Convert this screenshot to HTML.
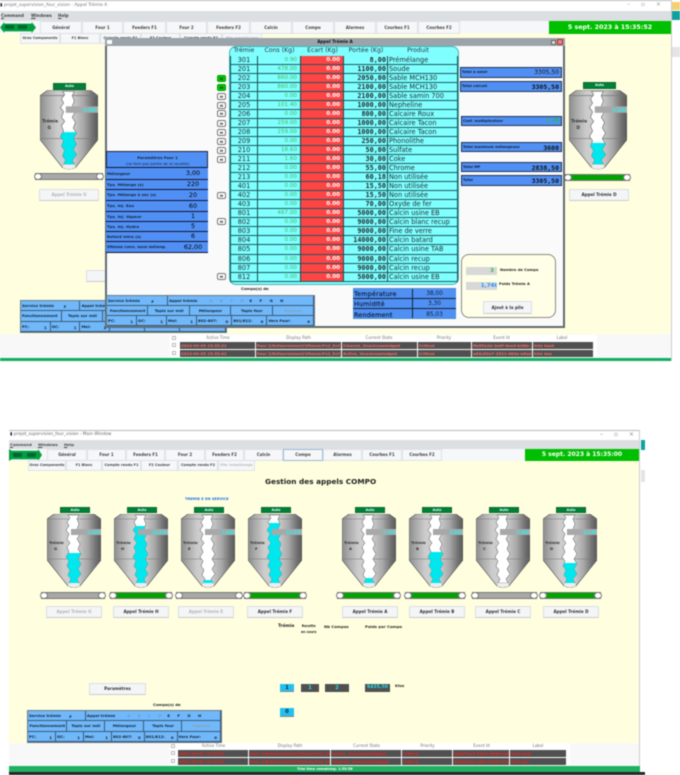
<!DOCTYPE html>
<html lang="fr"><head><meta charset="utf-8"><title>Appel Trémie</title>
<style>
html,body{margin:0;padding:0;background:#fff}
body{position:relative;width:680px;height:775px;overflow:hidden;font-family:"DejaVu Sans","Liberation Sans",sans-serif;color:#222;filter:blur(.45px)}
.a{position:absolute;box-sizing:border-box;white-space:nowrap}
.n{display:flex;position:absolute}
.n span{box-sizing:border-box;background:#f5f7f9;border:1px solid #dfe3e6;text-align:center;font-size:4px;color:#444;font-weight:bold;overflow:hidden;white-space:nowrap;flex:none}
.n.s span{font-size:3.5px}
.b{position:absolute;box-sizing:border-box;background:#f4f5f7;border:1px solid #dcdfe3;border-bottom-color:#c8ccd0;text-align:center;font-size:4.1px;font-weight:bold;color:#333;white-space:nowrap}
.d{color:#b5b5b5}
.clock{position:absolute;background:#00bf00;color:#fff;font-weight:bold;text-align:center;box-sizing:border-box}
.auto{position:absolute;background:#00803a;color:#dff;font-size:3.4px;text-align:center;font-weight:bold;box-sizing:border-box;border:1px solid #0a6a30}
.conv{position:absolute;box-sizing:border-box;height:7px;background:#a8a8a8;border-top:1px solid #777;border-bottom:1px solid #777}
.conv.g{background:#00a400}
.conv:before,.conv:after{content:"";position:absolute;top:-1px;width:8px;height:7px;border-radius:50%;background:#fff;border:1px solid #777;box-sizing:border-box}
.conv:before{left:-1px}.conv:after{right:-1px}
.r{display:flex;height:9.05px;font-size:6.6px;line-height:8.6px;box-sizing:border-box}
.r i{font-style:normal;display:block;box-sizing:border-box;border-right:1px solid #1a4a50;border-bottom:1px solid #1a5a60;background:#80ffff;overflow:hidden;flex:none;color:#1c2c30}
.r i:nth-child(1){width:28px;text-align:center;border-left:1px solid #1a4a50}
.r i:nth-child(2){width:43px;text-align:right;color:#3cba58;font-size:5.6px;padding-right:3px}
.r i:nth-child(3){width:43px;text-align:right;background:#ff4444;color:#fff;font-size:5.6px;font-weight:bold;padding-right:3px}
.r i:nth-child(4){width:44px;text-align:right;font:bold 6.8px/8.6px "DejaVu Sans Mono",monospace;padding-right:1px}
.r i:nth-child(5){width:70px;padding-left:1px}
.hb{position:absolute;left:217px;width:9px;height:7px;border:1px solid #777;border-radius:2px;background:#fff;font-size:3.8px;line-height:5px;text-align:center;font-weight:bold;box-sizing:border-box}
.hb.g{background:#00c800;border-color:#00a000}
.p{position:absolute;left:106px;width:102px;background:#5090f4;border-bottom:1px solid #113;box-sizing:border-box;font-size:3.9px;font-weight:bold;color:#123;padding-left:1px}
.p b{position:absolute;left:67px;width:40px;text-align:center;top:0;font-size:6.4px;font-weight:normal;color:#000}
.t{position:absolute;left:460px;width:102px;background:#5090f4;border:1px solid #235;box-sizing:border-box;font-size:3.6px;font-weight:bold;color:#123;padding-left:1px}
.t b{position:absolute;right:2px;top:1px;font:bold 6.5px "DejaVu Sans Mono",monospace;color:#111}
.sv{position:absolute;box-sizing:border-box;background:#70b8fa;border:1px solid #6a7a88;font-size:3.9px;font-weight:bold;color:#123}
.sv div{display:flex;height:33.33%}
.sv span{display:block;box-sizing:border-box;border-right:1px solid #3a5a7a;border-bottom:1px solid #3a5a7a;overflow:hidden;position:relative;line-height:9px;padding-left:1px;flex:none;white-space:nowrap}
.sv em{position:absolute;right:3px;top:1px;font-style:normal}
.sv u{text-decoration:none;color:#6a9ad0;margin-left:12px;word-spacing:6px}
.sv s{text-decoration:none;word-spacing:6px;margin-left:6px}
.al{position:absolute;box-sizing:border-box;background:#f4f4f4;font-size:4px;color:#777}
.al .h,.al .w{display:flex}
.al .h span{text-align:center;overflow:hidden;flex:none}
.al .w{height:7px;margin-bottom:1px}
.al .w span{background:#505050;font-size:3.9px;font-weight:bold;margin-right:1px;overflow:hidden;line-height:7px;padding-left:1px;box-sizing:border-box;flex:none;white-space:nowrap}
.ck{position:absolute;width:4px;height:4px;border:.5px solid #bbb;background:#fff;box-sizing:border-box}
.l{position:absolute;font-size:4.3px;font-weight:bold;color:#222;white-space:nowrap;text-align:center}
svg text{font-family:"DejaVu Sans",sans-serif}
</style></head><body>
<svg width="0" height="0" style="position:absolute"><defs>
<linearGradient id="gr" x1="0" x2="1" y1="0" y2="0"><stop offset="0" stop-color="#8c8c8c"/><stop offset=".12" stop-color="#a8a8a8"/><stop offset=".3" stop-color="#cccccc"/><stop offset=".55" stop-color="#d0d0d0"/><stop offset=".75" stop-color="#a8a8a8"/><stop offset=".9" stop-color="#747474"/><stop offset="1" stop-color="#585858"/></linearGradient>
<clipPath id="w"><polygon points="21,1 23,4 20,8 22,12 19,16 22,20 20,25 23,29 20,33 22,38 19,43 22,47 20,52 23,56 21,61 24,65 22,69 32,69 30,65 34,60 31,55 34,50 31,45 34,40 31,35 33,30 30,25 33,20 30,15 32,10 30,5 32,1"/></clipPath>
<symbol id="h" viewBox="0 0 54 74"><path d="M7 0H47L54 5V46L33 72Q27 75 21 72L0 46V5Z" fill="url(#gr)" stroke="#555" stroke-width=".6"/><path d="M0 45H54M0 5H54" stroke="#777" stroke-width=".6"/><polygon points="21,1 23,4 20,8 22,12 19,16 22,20 20,25 23,29 20,33 22,38 19,43 22,47 20,52 23,56 21,61 24,65 22,69 32,69 30,65 34,60 31,55 34,50 31,45 34,40 31,35 33,30 30,25 33,20 30,15 32,10 30,5 32,1" fill="#fff" stroke="#555" stroke-width=".5"/><path d="M22 69H32L33 72Q27 75 21 72Z" fill="#eee"/></symbol>
</defs></svg>

<!-- TOP WINDOW -->
<div class="a" style="left:0;top:0;width:671px;height:1px;background:#bbb"></div>
<div class="a" style="left:0;top:2px;font-size:4.4px;color:#777;line-height:8px"><span style="color:#223;font-weight:bold">▮</span> projet_supervision_four_vision - Appel Trémie A</div>
<div class="a" style="left:627px;top:1px;font-size:6px;color:#999;word-spacing:9px">– ▫ ×</div>
<div class="a" style="left:0;top:11px;width:671px;height:10px;background:#dcdfe2;font-size:4.1px;line-height:9px;font-weight:bold;color:#444"><span class="a" style="left:1px"><u>C</u>ommand</span><span class="a" style="left:31px"><u>W</u>indows</span><span class="a" style="left:58px"><u>H</u>elp</span></div>
<div class="a" style="left:0;top:21px;width:671px;height:13px;background:#f5f7f9"></div>
<div class="a" style="left:0;top:33px;width:671px;height:301px;background:#ffffe0"></div>
<div class="a" style="left:0;top:22px;width:36px;height:11px;background:#00a040;clip-path:polygon(0 50%,12% 0,12% 15%,88% 15%,88% 0,100% 50%,88% 100%,88% 85%,12% 85%,12% 100%)"></div>
<div class="a" style="left:5px;top:25px;width:9px;height:4px;background:#063"></div><div class="a" style="left:18px;top:25px;width:9px;height:4px;background:#063"></div>
<div class="n" style="left:40px;top:21px;height:13px;line-height:11px">
<span style="width:42px">Général</span><span style="width:41px">Four 1</span><span style="width:43px">Feeders F1</span><span style="width:41px">Four 2</span><span style="width:43px">Feeders F2</span><span style="width:42px">Calcin</span><span style="width:42px">Compo</span><span style="width:42px">Alarmes</span><span style="width:42px">Courbes F1</span><span style="width:42px">Courbes F2</span></div>
<div class="n s" style="left:20px;top:33px;height:11px;line-height:9px">
<span style="width:40px">Gros Components</span><span style="width:40px">F1 Blanc</span><span style="width:41px">Compte rendu F1</span><span style="width:39px">F2 Couleur</span><span style="width:42px">Compte rendu F2</span><span style="width:40px;color:#bbb">Pile remplissage</span></div>
<div class="clock" style="left:549px;top:21px;width:122px;height:13px;font-size:6.3px;line-height:13px">5 sept. 2023 à 15:35:52</div>

<!-- top hoppers -->
<div class="auto" style="left:53px;top:83px;width:33px;height:7px;line-height:5px">Auto</div>
<svg class="a" style="left:40px;top:90px;width:58px;height:80px" viewBox="0 0 54 74"><use href="#h" width="54" height="74"/><rect x="15" y="39" width="24" height="31" fill="#00e8ee" clip-path="url(#w)"/><rect x="24" y="15" width="30" height="6" fill="#a8a8a8"/><text x="53" y="20" font-size="4.4" font-weight="bold" fill="#20f0f0" text-anchor="end">9,99t</text><text x="2" y="30" font-size="3.9" fill="#333" font-weight="bold">Trémie</text><text x="7" y="36" font-size="3.9" fill="#333" font-weight="bold">G</text></svg>
<div class="conv" style="left:35px;top:173px;width:68px"></div>
<div class="b d" style="left:39px;top:189px;width:60px;height:12px;line-height:10px">Appel Trémie G</div>
<div class="b" style="left:86px;top:270px;width:24px;height:12px"></div>

<div class="auto" style="left:583px;top:82px;width:33px;height:7px;line-height:5px">Auto</div>
<svg class="a" style="left:569px;top:90px;width:58px;height:80px" viewBox="0 0 54 74"><use href="#h" width="54" height="74"/><rect x="15" y="49" width="24" height="21" fill="#00e8ee" clip-path="url(#w)"/><rect x="24" y="15" width="30" height="6" fill="#a8a8a8"/><text x="53" y="20" font-size="4.4" font-weight="bold" fill="#20f0f0" text-anchor="end">6,44t</text><text x="2" y="30" font-size="3.9" fill="#333" font-weight="bold">Trémie</text><text x="7" y="36" font-size="3.9" fill="#333" font-weight="bold">D</text></svg>
<div class="conv g" style="left:565px;top:174px;width:65px"></div>
<div class="b" style="left:569px;top:189px;width:60px;height:12px;line-height:10px">Appel Trémie D</div>

<!-- left service panel behind dialog -->
<div class="sv" style="left:20px;top:300px;width:207px;height:33px">
<div><span style="width:29%">Service trémie<em style="right:13px">F</em></span><span style="width:71%">Appel trémie</span></div>
<div><span style="width:20%">Fonctionnement</span><span style="width:20%;text-align:center">Tapis sur mél</span><span style="width:60%"></span></div>
<div><span style="width:14.5%">PC:<em>1</em></span><span style="width:14.5%">GC:<em>1</em></span><span style="width:14.5%">Mel:<em>1</em></span><span style="width:17%"></span><span style="width:17%"></span><span style="width:22.5%"></span></div></div>

<!-- Alarm band top -->
<div class="a" style="left:0;top:334px;width:671px;height:24px;background:#f8f8f8"></div>
<div class="al" style="left:170px;top:335px;width:427px;height:22px;background:#fff">
<div class="ck" style="left:2px;top:1px"></div><div class="ck" style="left:2px;top:8px"></div><div class="ck" style="left:2px;top:16px"></div>
<div class="h" style="height:7px;padding-left:10px;line-height:6px"><span style="width:76px">Active Time</span><span style="width:85px">Display Path</span><span style="width:76px">Current State</span><span style="width:54px">Priority</span><span style="width:61px">Event Id</span><span style="width:60px">Label</span></div>
<div class="w" style="padding-left:10px;color:#ff6868"><span style="width:75px">2023-09-05 15:35:32</span><span style="width:85px">Four 2/Enfournement/Vitesse/Fn2_Enf_...</span><span style="width:75px">Cleared, Unacknowledged</span><span style="width:53px">Critical</span><span style="width:60px">ffe65e2d-3a6f-4ee4-b98b-...</span><span style="width:60px">très haut</span></div>
<div class="w" style="padding-left:10px;color:#ff6868"><span style="width:75px">2023-09-05 15:35:42</span><span style="width:85px">Four 2/Enfournement/Vitesse/Fn2_Enf_...</span><span style="width:75px">Active, Unacknowledged</span><span style="width:53px">Critical</span><span style="width:60px">a64c62e7-3521-483e-a6ae-...</span><span style="width:60px">très bas</span></div></div>
<div class="a" style="left:0;top:358px;width:671px;height:3px;background:#10b060"></div>

<!-- DIALOG -->
<div class="a" style="left:105px;top:38px;width:460px;height:290px;background:#fafafa;border:2px solid #5f6a72;border-top:0"></div>
<div class="a" style="left:105px;top:38px;width:460px;height:8px;background:#9aa4aa;text-align:center;font-size:4.2px;font-weight:bold;line-height:8px;color:#111">Appel Trémie A</div>
<div class="a" style="left:107px;top:40px;width:5px;height:4px;background:#fff"></div>
<div class="a" style="left:551px;top:40px;width:5px;height:5px;background:#ddd;border:.5px solid #666"></div>
<div class="a" style="left:557px;top:39px;width:6px;height:6px;background:#f08080;border:.5px solid #a33;border-radius:1px"></div>

<!-- Main table -->
<div class="a" style="left:229px;top:46px;width:230px;height:239px;background:#80ffff;border:1.5px solid #40b8b8;border-radius:7px"></div>
<div class="a" style="left:230px;top:47px;width:228px;height:9px;font-size:6.2px;display:flex;color:#234;text-align:center;line-height:8px"><span style="width:28px">Trémie</span><span style="width:43px">Cons (Kg)</span><span style="width:43px">Ecart (Kg)</span><span style="width:44px">Portée (Kg)</span><span style="width:60px">Produit</span></div>
<div class="a" style="left:230px;top:55.5px;width:228px">
<div class="r"><i>301</i><i>0.90</i><i>0.00</i><i>8,00</i><i>Prémélange</i></div>
<div class="r"><i>201</i><i>478.00</i><i>0.00</i><i>1100,00</i><i>Soude</i></div>
<div class="r"><i>202</i><i>860.00</i><i>0.00</i><i>2050,00</i><i>Sable MCH130</i></div>
<div class="r"><i>203</i><i>860.00</i><i>0.00</i><i>2100,00</i><i>Sable MCH130</i></div>
<div class="r"><i>204</i><i>0.00</i><i>0.00</i><i>2100,00</i><i>Sable samin 700</i></div>
<div class="r"><i>205</i><i>101.40</i><i>0.00</i><i>1000,00</i><i>Nepheline</i></div>
<div class="r"><i>206</i><i>0.00</i><i>0.00</i><i>800,00</i><i>Calcaire Roux</i></div>
<div class="r"><i>207</i><i>259.00</i><i>0.00</i><i>1000,00</i><i>Calcaire Tacon</i></div>
<div class="r"><i>208</i><i>259.00</i><i>0.00</i><i>1000,00</i><i>Calcaire Tacon</i></div>
<div class="r"><i>209</i><i>0.00</i><i>0.00</i><i>250,00</i><i>Phonolithe</i></div>
<div class="r"><i>210</i><i>18.60</i><i>0.00</i><i>50,00</i><i>Sulfate</i></div>
<div class="r"><i>211</i><i>1.60</i><i>0.00</i><i>30,00</i><i>Coke</i></div>
<div class="r"><i>212</i><i>0.00</i><i>0.00</i><i>55,00</i><i>Chrome</i></div>
<div class="r"><i>213</i><i>0.00</i><i>0.00</i><i>60,18</i><i>Non utilisée</i></div>
<div class="r"><i>401</i><i>0.00</i><i>0.00</i><i>15,50</i><i>Non utilisée</i></div>
<div class="r"><i>402</i><i>0.00</i><i>0.00</i><i>15,50</i><i>Non utilisée</i></div>
<div class="r"><i>403</i><i>0.00</i><i>0.00</i><i>70,00</i><i>Oxyde de fer</i></div>
<div class="r"><i>801</i><i>467.00</i><i>0.00</i><i>5000,00</i><i>Calcin usine EB</i></div>
<div class="r"><i>802</i><i>0.00</i><i>0.00</i><i>9000,00</i><i>Calcin blanc recup</i></div>
<div class="r"><i>803</i><i>0.00</i><i>0.00</i><i>9000,00</i><i>Fine de verre</i></div>
<div class="r"><i>804</i><i>0.00</i><i>0.00</i><i>14000,00</i><i>Calcin batard</i></div>
<div class="r"><i>805</i><i>0.00</i><i>0.00</i><i>9000,00</i><i>Calcin usine TAB</i></div>
<div class="r"><i>806</i><i>0.00</i><i>0.00</i><i>9000,00</i><i>Calcin recup</i></div>
<div class="r"><i>807</i><i>0.00</i><i>0.00</i><i>9000,00</i><i>Calcin recup</i></div>
<div class="r"><i>812</i><i>0.00</i><i>0.00</i><i>5000,00</i><i>Calcin usine EB</i></div>
</div>

<!-- H buttons -->
<div class="hb g" style="top:75px">H</div><div class="hb g" style="top:84px">H</div><div class="hb" style="top:93px">H</div><div class="hb" style="top:102px">H</div><div class="hb" style="top:110px">H</div><div class="hb" style="top:120px">H</div><div class="hb" style="top:129px">H</div><div class="hb" style="top:138px">H</div><div class="hb" style="top:147px">H</div><div class="hb" style="top:156px">H</div><div class="hb" style="top:192px">H</div><div class="hb" style="top:218px">H</div><div class="hb" style="top:273px">H</div>

<!-- Params -->
<div class="p" style="top:151px;height:17px;text-align:center;padding-top:3px;line-height:6px;border:1px solid #224;border-bottom:1px solid #113">Paramètres Four 1<br><span style="font-weight:normal">(ne font pas partie de la recette)</span></div>
<div class="p" style="top:168px;height:12px;line-height:11px">Mélangeur<b>3,00</b></div>
<div class="p" style="top:180px;height:10px;line-height:9px">Tps. Mélange (s)<b>220</b></div>
<div class="p" style="top:190px;height:11px;line-height:10px">Tps. Mélange à sec (s)<b>20</b></div>
<div class="p" style="top:201px;height:11px;line-height:10px">Tps. Inj. Eau<b>60</b></div>
<div class="p" style="top:212px;height:10px;line-height:9px">Tps. Inj. Vapeur<b>1</b></div>
<div class="p" style="top:222px;height:10px;line-height:9px">Tps. Inj. Hydro<b>5</b></div>
<div class="p" style="top:232px;height:10px;line-height:9px">Retard Intro (s)<b>6</b></div>
<div class="p" style="top:242px;height:11px;line-height:10px">Vitesse conv. sous mélang.<b>62,00</b></div>

<!-- Right totals -->
<div class="t" style="top:67px;height:11px;line-height:9px">Total à saisir<b style="font-size:6px;font-weight:normal;font-family:'DejaVu Sans'">3305,50</b></div>
<div class="t" style="top:81px;height:11px;line-height:9px">Total calculé<b>3305,50</b></div>
<div class="t" style="top:116px;height:10px;line-height:8px;left:461px;width:101px">Coef. multiplicateur<b style="color:#20c040;font-size:5.5px">1,20</b></div>
<div class="t" style="top:142px;height:10px;line-height:8px;left:461px;width:101px">Total maximum mélangeuse<b>3600</b></div>
<div class="t" style="top:162px;height:10px;line-height:8px;left:461px;width:101px">Total MP<b>2838,50</b></div>
<div class="t" style="top:175px;height:11px;line-height:9px;left:461px;width:101px">Total<b>3305,50</b></div>

<!-- Bottom right box -->
<div class="a" style="left:461px;top:254px;width:95px;height:64px;background:#ffffe8;border:1px solid #8a8a80;border-radius:8px"></div>
<div class="a" style="left:466px;top:267px;width:31px;height:8px;background:#d8d8d8;font-size:5.5px;text-align:right;color:#30c040;font-weight:bold;line-height:8px;padding-right:3px">3</div>
<div class="l" style="left:500px;top:268px;font-size:3.7px">Nombre de Compo</div>
<div class="a" style="left:466px;top:282px;width:31px;height:8px;background:#d8d8d8;font-size:5.5px;text-align:right;color:#2090ff;font-weight:bold;line-height:8px">1,74t</div>
<div class="l" style="left:499px;top:282px;font-size:3.7px">Poids Trémie A</div>
<div class="b" style="left:483px;top:301px;width:49px;height:13px;line-height:11px">Ajout à la pile</div>

<!-- Temp table -->
<div class="a" style="left:353px;top:288px;width:103px;height:31px;background:#5090f4;border:1px solid #4a90d0"></div>
<div class="a" style="left:354px;top:289px;width:58px;font-size:6.4px;color:#0c1c30;line-height:10.3px;letter-spacing:.2px;-webkit-text-stroke:.15px #0c1c30">Température<br>Humidité<br>Rendement</div>
<div class="a" style="left:412px;top:289px;width:44px;font-size:5.8px;color:#0c1c30;line-height:10.3px;text-align:center;border-left:1px solid #123;height:29px">38,00<br>3,30<br>85,03</div>
<div class="a" style="left:353px;top:298px;width:103px;height:1px;background:#123"></div><div class="a" style="left:353px;top:308px;width:103px;height:1px;background:#123"></div>

<div class="l" style="left:241px;top:286px;font-size:3.9px">Compo(s) de</div>
<!-- dialog service panel -->
<div class="sv" style="left:106px;top:295px;width:209px;height:32px">
<div><span style="width:29.5%">Service trémie<em style="right:13px">F</em></span><span style="width:70.5%">Appel trémie<u>A B C D</u><s>E F G H</s></span></div>
<div><span style="width:20%;text-align:center">Fonctionnement</span><span style="width:20%;text-align:center">Tapis sur mél</span><span style="width:20%;text-align:center">Mélangeur</span><span style="width:20%;text-align:center">Tapis four</span><span style="width:20%;text-align:center;color:#8aa0b8">Réglage</span></div>
<div><span style="width:14.5%">PC:<em>1</em></span><span style="width:14.5%">GC:<em>1</em></span><span style="width:14.5%">Mel:<em>1</em></span><span style="width:17%">802-807:<em>0</em></span><span style="width:17%">801/812:<em>0</em></span><span style="width:22.5%">Vers Four:<em>0</em></span></div></div>

<!-- right edge fragments -->
<div class="a" style="left:672px;top:2px;width:8px;height:8px;background:#f5d070"></div>
<div class="a" style="left:672px;top:11px;width:8px;height:9px;background:#10a0a0"></div>
<div class="a" style="left:672px;top:47px;width:8px;height:10px;background:#e4e4e4"></div>
<div class="a" style="left:671px;top:0;width:1px;height:361px;background:#ccc"></div>

<!-- LOWER WINDOW -->
<div class="a" style="left:9px;top:430px;width:631px;height:1px;background:#bbb"></div>
<div class="a" style="left:639px;top:430px;width:1px;height:340px;background:#ccc"></div>
<div class="a" style="left:641px;top:440px;width:4px;height:10px;background:#10a0a0"></div>
<div class="a" style="left:641px;top:470px;width:4px;height:12px;background:#e4e4e4"></div>
<div class="a" style="left:10px;top:431px;font-size:4.3px;color:#666;line-height:8px"><span style="color:#223;font-weight:bold">▮</span> projet_supervision_four_vision - Main Window</div>
<div class="a" style="left:600px;top:431px;font-size:6px;color:#888;word-spacing:9px;line-height:8px">– ▫ ×</div>
<div class="a" style="left:9px;top:440px;width:630px;height:9px;background:#dcdfe2;font-size:3.9px;line-height:9px;font-weight:bold;color:#444"><span class="a" style="left:1px"><u>C</u>ommand</span><span class="a" style="left:29px"><u>W</u>indows</span><span class="a" style="left:55px"><u>H</u>elp</span></div>
<div class="a" style="left:9px;top:449px;width:630px;height:12px;background:#f5f7f9"></div>
<div class="a" style="left:9px;top:461px;width:630px;height:282px;background:#ffffe0"></div>
<div class="a" style="left:9px;top:449px;width:33px;height:12px;background:#00a040;clip-path:polygon(0 50%,0 0,8% 15%,88% 15%,88% 0,100% 50%,88% 100%,88% 85%,8% 85%,0 100%)"></div>
<div class="a" style="left:13px;top:453px;width:9px;height:4px;background:#063"></div><div class="a" style="left:27px;top:453px;width:9px;height:4px;background:#063"></div>
<div class="n" style="left:47px;top:449px;height:12px;line-height:10px">
<span style="width:40px">Général</span><span style="width:39px">Four 1</span><span style="width:39px">Feeders F1</span><span style="width:40px">Four 2</span><span style="width:39px">Feeders F2</span><span style="width:39px">Calcin</span><span style="width:40px;border-color:#9ab8d8">Compo</span><span style="width:39px">Alarmes</span><span style="width:40px">Courbes F1</span><span style="width:40px">Courbes F2</span></div>
<div class="n s" style="left:28px;top:460px;height:11px;line-height:9px">
<span style="width:38px">Gros Components</span><span style="width:36px">F1 Blanc</span><span style="width:39px">Compte rendu F1</span><span style="width:37px">F2 Couleur</span><span style="width:40px">Compte rendu F2</span><span style="width:37px;color:#bbb">Pile remplissage</span></div>
<div class="clock" style="left:525px;top:449px;width:114px;height:12px;font-size:6px;line-height:12px">5 sept. 2023 à 15:35:00</div>
<div class="a" style="left:265px;top:477px;font:bold 7.3px/10px 'DejaVu Sans',sans-serif;color:#222">Gestion des appels COMPO</div>
<div class="a" style="left:185px;top:496px;font-size:3.6px;font-weight:bold;color:#2070e0;line-height:6px">TREMIE E EN SERVICE</div>

<!-- lower hoppers -->
<div class="auto" style="left:60px;top:507px;width:30px;height:6px;line-height:4px">Auto</div>
<svg class="a" style="left:47px;top:514px;width:54px;height:74px" viewBox="0 0 54 74"><use href="#h" width="54" height="74"/><rect x="15" y="39" width="24" height="31" fill="#00e8ee" clip-path="url(#w)"/><rect x="24" y="15" width="30" height="6" fill="#a8a8a8"/><text x="53" y="20" font-size="4.2" font-weight="bold" fill="#20f0f0" text-anchor="end">5,96t</text><text x="2" y="30" font-size="3.9" fill="#333" font-weight="bold">Trémie</text><text x="7" y="36" font-size="3.9" fill="#333" font-weight="bold">G</text></svg>
<div class="auto" style="left:127px;top:507px;width:30px;height:6px;line-height:4px">Auto</div>
<svg class="a" style="left:114px;top:514px;width:54px;height:74px" viewBox="0 0 54 74"><use href="#h" width="54" height="74"/><rect x="15" y="12" width="24" height="58" fill="#00e8ee" clip-path="url(#w)"/><rect x="24" y="15" width="30" height="6" fill="#a8a8a8"/><text x="53" y="20" font-size="4.2" font-weight="bold" fill="#20f0f0" text-anchor="end">18,83t</text><text x="2" y="30" font-size="3.9" fill="#333" font-weight="bold">Trémie</text><text x="7" y="36" font-size="3.9" fill="#333" font-weight="bold">H</text></svg>
<div class="auto" style="left:194px;top:507px;width:30px;height:6px;line-height:4px">Auto</div>
<svg class="a" style="left:181px;top:514px;width:54px;height:74px" viewBox="0 0 54 74"><use href="#h" width="54" height="74"/><rect x="15" y="66" width="24" height="4" fill="#00e8ee" clip-path="url(#w)"/><rect x="24" y="15" width="30" height="6" fill="#a8a8a8"/><text x="53" y="20" font-size="4.2" font-weight="bold" fill="#20f0f0" text-anchor="end">1,88t</text><text x="2" y="30" font-size="3.9" fill="#333" font-weight="bold">Trémie</text><text x="7" y="36" font-size="3.9" fill="#333" font-weight="bold">E</text></svg>
<div class="auto" style="left:261px;top:507px;width:30px;height:6px;line-height:4px">Auto</div>
<svg class="a" style="left:248px;top:514px;width:54px;height:74px" viewBox="0 0 54 74"><use href="#h" width="54" height="74"/><rect x="15" y="9" width="24" height="61" fill="#00e8ee" clip-path="url(#w)"/><rect x="24" y="15" width="30" height="6" fill="#a8a8a8"/><text x="53" y="20" font-size="4.2" font-weight="bold" fill="#20f0f0" text-anchor="end">15,47t</text><text x="2" y="30" font-size="3.9" fill="#333" font-weight="bold">Trémie</text><text x="7" y="36" font-size="3.9" fill="#333" font-weight="bold">F</text></svg>
<div class="auto" style="left:355px;top:507px;width:30px;height:6px;line-height:4px">Auto</div>
<svg class="a" style="left:342px;top:514px;width:54px;height:74px" viewBox="0 0 54 74"><use href="#h" width="54" height="74"/><rect x="15" y="64" width="24" height="6" fill="#00e8ee" clip-path="url(#w)"/><rect x="24" y="15" width="30" height="6" fill="#a8a8a8"/><text x="53" y="20" font-size="4.2" font-weight="bold" fill="#20f0f0" text-anchor="end">1,79t</text><text x="2" y="30" font-size="3.9" fill="#333" font-weight="bold">Trémie</text><text x="7" y="36" font-size="3.9" fill="#333" font-weight="bold">A</text></svg>
<div class="auto" style="left:422px;top:507px;width:30px;height:6px;line-height:4px">Auto</div>
<svg class="a" style="left:409px;top:514px;width:54px;height:74px" viewBox="0 0 54 74"><use href="#h" width="54" height="74"/><rect x="15" y="38" width="24" height="32" fill="#00e8ee" clip-path="url(#w)"/><rect x="24" y="15" width="30" height="6" fill="#a8a8a8"/><text x="53" y="20" font-size="4.2" font-weight="bold" fill="#20f0f0" text-anchor="end">6,46t</text><text x="2" y="30" font-size="3.9" fill="#333" font-weight="bold">Trémie</text><text x="7" y="36" font-size="3.9" fill="#333" font-weight="bold">B</text></svg>
<div class="auto" style="left:489px;top:507px;width:30px;height:6px;line-height:4px">Auto</div>
<svg class="a" style="left:476px;top:514px;width:54px;height:74px" viewBox="0 0 54 74"><use href="#h" width="54" height="74"/><rect x="24" y="15" width="30" height="6" fill="#a8a8a8"/><text x="53" y="20" font-size="4.2" font-weight="bold" fill="#20f0f0" text-anchor="end">0,00t</text><text x="2" y="30" font-size="3.9" fill="#333" font-weight="bold">Trémie</text><text x="7" y="36" font-size="3.9" fill="#333" font-weight="bold">C</text></svg>
<div class="auto" style="left:556px;top:507px;width:30px;height:6px;line-height:4px">Auto</div>
<svg class="a" style="left:543px;top:514px;width:54px;height:74px" viewBox="0 0 54 74"><use href="#h" width="54" height="74"/><rect x="15" y="49" width="24" height="21" fill="#00e8ee" clip-path="url(#w)"/><rect x="24" y="15" width="30" height="6" fill="#a8a8a8"/><text x="53" y="20" font-size="4.2" font-weight="bold" fill="#20f0f0" text-anchor="end">4,14t</text><text x="2" y="30" font-size="3.9" fill="#333" font-weight="bold">Trémie</text><text x="7" y="36" font-size="3.9" fill="#333" font-weight="bold">D</text></svg>

<div class="conv" style="left:41px;top:592px;width:64px"></div>
<div class="conv g" style="left:110px;top:592px;width:62px"></div>
<div class="conv" style="left:176px;top:592px;width:66px"></div>
<div class="conv g" style="left:244px;top:592px;width:62px"></div>
<div class="conv g" style="left:337px;top:592px;width:63px"></div>
<div class="conv g" style="left:405px;top:592px;width:60px"></div>
<div class="conv" style="left:472px;top:592px;width:65px"></div>
<div class="conv g" style="left:540px;top:592px;width:61px"></div>

<div class="b d" style="left:46px;top:606px;width:56px;height:12px;line-height:10px">Appel Trémie G</div>
<div class="b" style="left:113px;top:606px;width:56px;height:12px;line-height:10px">Appel Trémie H</div>
<div class="b d" style="left:178px;top:606px;width:56px;height:12px;line-height:10px">Appel Trémie E</div>
<div class="b" style="left:247px;top:606px;width:56px;height:12px;line-height:10px">Appel Trémie F</div>
<div class="b" style="left:342px;top:606px;width:56px;height:12px;line-height:10px">Appel Trémie A</div>
<div class="b" style="left:409px;top:606px;width:56px;height:12px;line-height:10px">Appel Trémie B</div>
<div class="b" style="left:475px;top:606px;width:56px;height:12px;line-height:10px">Appel Trémie C</div>
<div class="b" style="left:543px;top:606px;width:56px;height:12px;line-height:10px">Appel Trémie D</div>

<div class="l" style="left:278px;top:624px">Trémie</div>
<div class="l" style="left:301px;top:623px;font-size:3.2px;line-height:6px">Recette<br>en cours</div>
<div class="l" style="left:324px;top:624px;font-size:3.9px">Nb Compos</div>
<div class="l" style="left:365px;top:624px;font-size:3.9px">Poids par Compo</div>
<div class="a" style="left:280px;top:684px;width:14px;height:8px;background:#20c0f0;border-bottom:1px solid #888;font-size:5px;text-align:center;font-weight:bold;line-height:8px;color:#123">1</div>
<div class="a" style="left:301px;top:684px;width:18px;height:8px;background:#505050;font-size:5px;text-align:center;font-weight:bold;line-height:8px;color:#20e0f0">1</div>
<div class="a" style="left:325px;top:684px;width:24px;height:8px;background:#505050;font-size:5px;text-align:center;font-weight:bold;line-height:8px;color:#20e0f0">2</div>
<div class="a" style="left:365px;top:684px;width:25px;height:8px;background:#505050;font-size:4.6px;text-align:center;font-weight:bold;line-height:8px;color:#20e0f0">9435,50</div>
<div class="l" style="left:395px;top:684px;font-size:3.4px">Kilos</div>
<div class="a" style="left:280px;top:708px;width:14px;height:9px;background:#20c0f0;border-bottom:1px solid #888;font-size:5px;text-align:center;font-weight:bold;line-height:8px;color:#123">0</div>
<div class="b" style="left:89px;top:683px;width:57px;height:12px;line-height:10px">Paramètres</div>
<div class="l" style="left:153px;top:702px;font-size:3.9px">Compo(s) de</div>

<div class="sv" style="left:27px;top:710px;width:195px;height:33px">
<div><span style="width:30%">Service trémie<em style="right:13px">F</em></span><span style="width:70%">Appel trémie<u>A B C D</u><s>E F G H</s></span></div>
<div><span style="width:20%;text-align:center">Fonctionnement</span><span style="width:20%;text-align:center">Tapis sur mél</span><span style="width:20%;text-align:center">Mélangeur</span><span style="width:20%;text-align:center">Tapis four</span><span style="width:20%;text-align:center;color:#8aa0b8">Réglage</span></div>
<div><span style="width:14.5%">PC:<em>1</em></span><span style="width:14.5%">GC:<em>1</em></span><span style="width:14.5%">Mel:<em>1</em></span><span style="width:17%">802-807:<em>0</em></span><span style="width:17%">801/812:<em>0</em></span><span style="width:22.5%">Vers Four:<em>0</em></span></div></div>

<div class="a" style="left:9px;top:743px;width:630px;height:23px;background:#f8f8f8"></div>
<div class="al" style="left:170px;top:743px;width:400px;height:22px;background:#fff">
<div class="ck" style="left:1px;top:1px"></div><div class="ck" style="left:1px;top:8px"></div><div class="ck" style="left:1px;top:16px"></div>
<div class="h" style="height:7px;padding-left:8px;line-height:6px"><span style="width:71px">Active Time</span><span style="width:82px">Display Path</span><span style="width:71px">Current State</span><span style="width:51px">Priority</span><span style="width:57px">Event Id</span><span style="width:56px">Label</span></div>
<div class="w" style="padding-left:8px;color:#ff1c1c"><span style="width:70px">2023-09-05 15:33:53</span><span style="width:81px">Four 2/Enfournement/Vitesse/Fn2_Enf...</span><span style="width:70px">Active, Unacknowledged</span><span style="width:50px">Critical</span><span style="width:56px">a6ed7ce4-5101-4838-ae63-...</span><span style="width:56px">très haut</span></div>
<div class="w" style="padding-left:8px;color:#ff1c1c"><span style="width:70px">2023-09-05 15:34:01</span><span style="width:81px">Four 2/Enfournement/Vitesse/Fn2_Enf...</span><span style="width:70px">Cleared, Unacknowledged</span><span style="width:50px">Critical</span><span style="width:56px">4b3fe83a-e601-4e30-97c5-...</span><span style="width:56px">très bas</span></div></div>
<div class="a" style="left:9px;top:766px;width:631px;height:6px;background:#20b060;color:#fff;font-size:3.4px;line-height:6px;padding-left:288px;font-weight:bold">Trial time remaining: 1:59:56</div>
<div class="a" style="left:9px;top:772px;width:636px;height:3px;background:#20282c"></div>
</body></html>
